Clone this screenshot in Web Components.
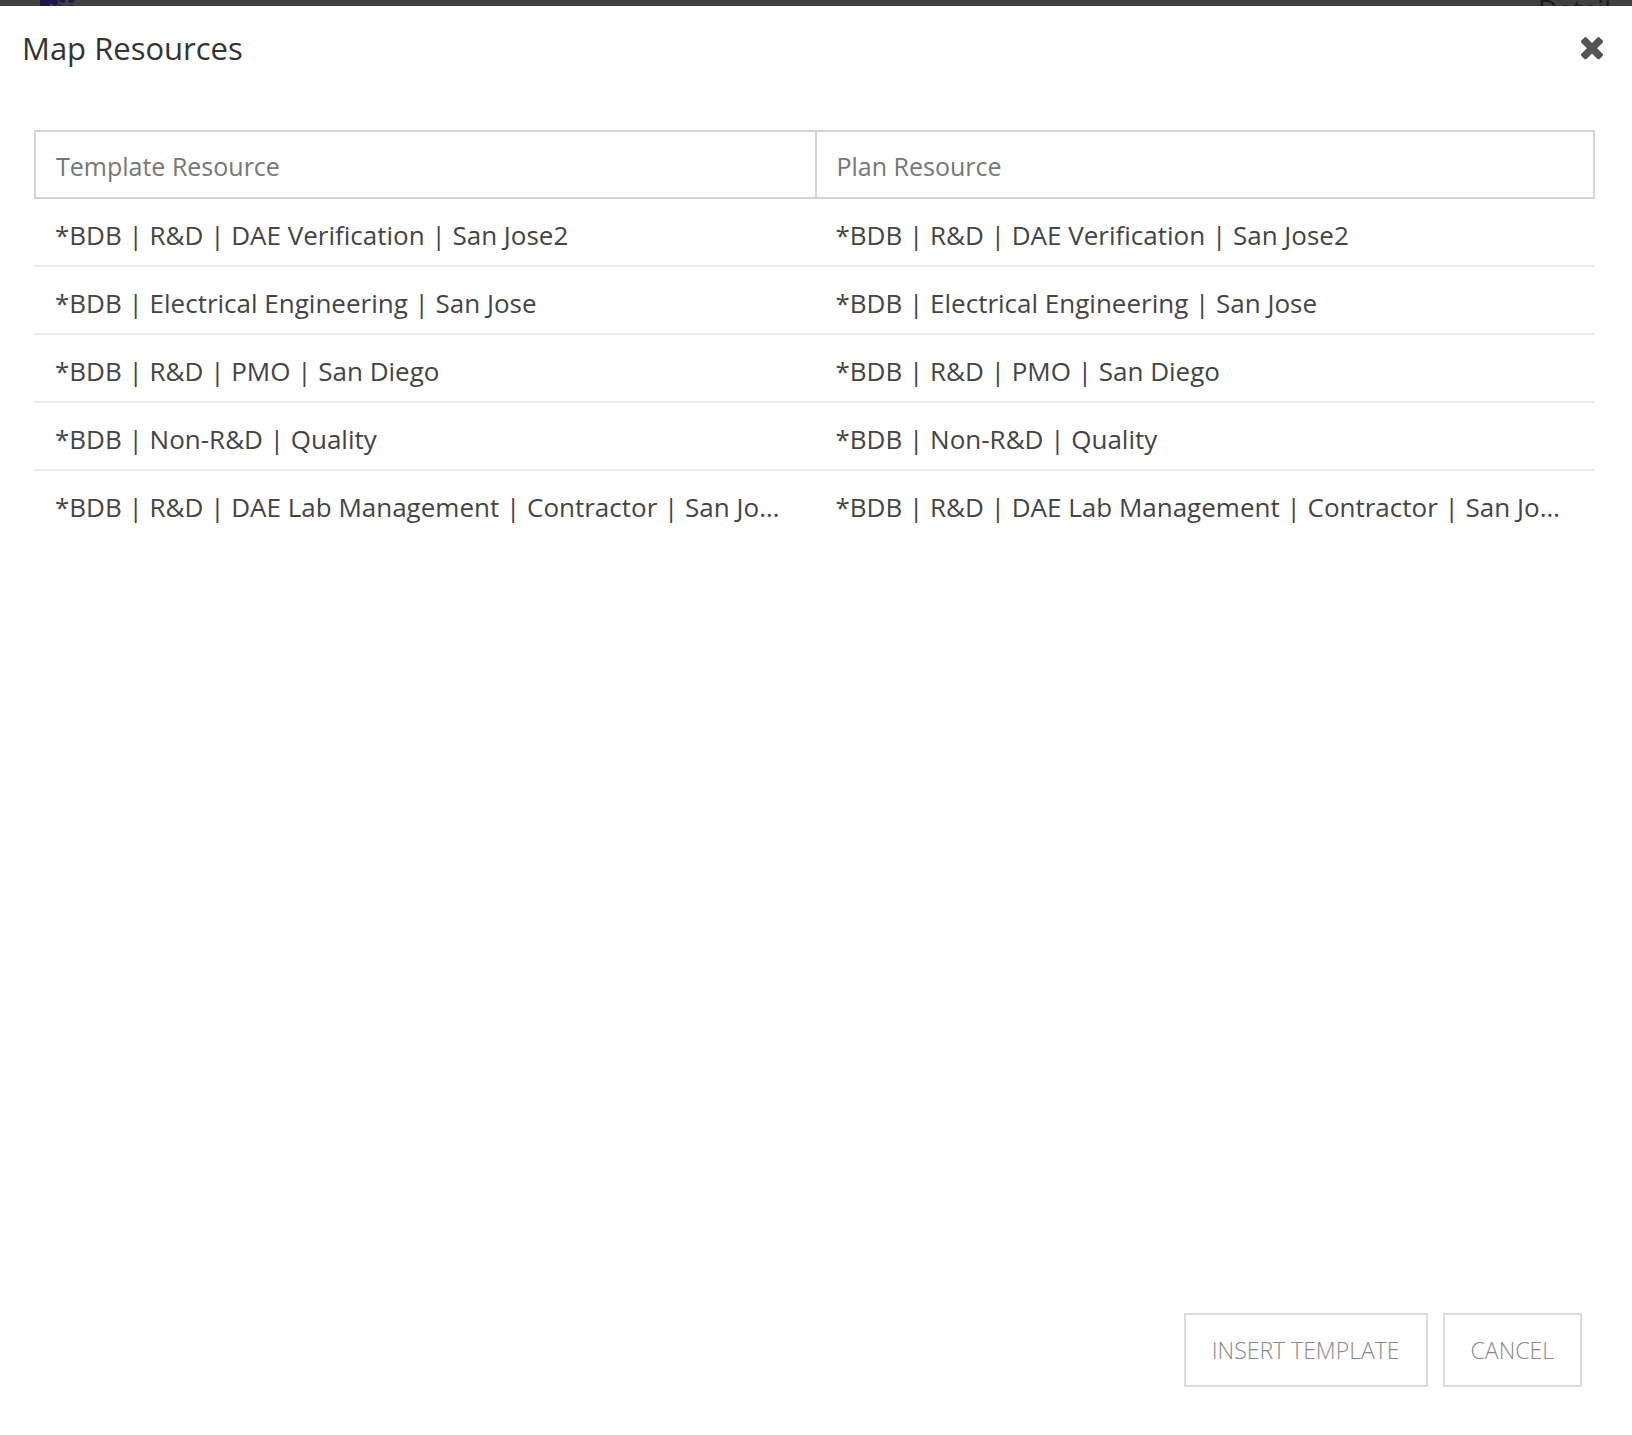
<!DOCTYPE html>
<html lang="en">
<head>
<meta charset="UTF-8">
<meta name="viewport" content="width=device-width, initial-scale=1">
<title>Map Resources</title>
<style>
    html, body {
        height: 100%;
        margin: 0;
    }

    body {
        background: #404040;
        color: #444;
        font-family: "Segoe UI", "Open Sans", "Noto Sans", sans-serif;
        font-size: 26px;
        overflow: hidden;
    }
</style>
</head>
<body>
<page-backdrop>Detail</page-backdrop>
<modal-dialog heading="Map Resources">
    <resource-map></resource-map>
    <dialog-button slot="actions">INSERT TEMPLATE</dialog-button>
    <dialog-button slot="actions">CANCEL</dialog-button>
</modal-dialog>

<script>
// The dimmed page that stays visible above the dialog
class PageBackdrop extends HTMLElement {
    constructor() {
        super();
        this.attachShadow({ mode: 'open' });
        this.shadowRoot.innerHTML = `
      <style>
        :host {
          display: flex;
          justify-content: space-between;
          height: 6px;
          padding: 0 21px 0 40px;
          overflow: hidden;
          background: #404040;
          color: #1a1a1a;
          font-size: 27px;
          line-height: 20px;
        }

        svg {
          display: block;
          flex: none;
        }
      </style>

      <svg width="36" height="6" viewBox="0 0 36 6" fill="#1c1a48" aria-hidden="true">
        <path d="M0 0H18V3L16 6H13V4H10V6H0Z"/>
        <path d="M19 0H25V2Q22 4 19 1ZM28 0H35Q34 3 31 3T28 0Z"/>
        <path d="M18 6Q20 3 23 6ZM28 6Q31 4 35 6Z"/>
      </svg>
      <span><slot></slot></span>
    `;
    }
}

class ModalDialog extends HTMLElement {
    constructor() {
        super();
        this.attachShadow({ mode: 'open' });
        this.shadowRoot.innerHTML = `
      <style>
        :host {
          display: block;
          height: calc(100% - 6px);
          background: #fff;
        }

        section {
          display: flex;
          flex-direction: column;
          height: 100%;
        }

        header {
          display: flex;
          align-items: center;
          justify-content: space-between;
          height: 84px;
          padding: 0 28px 0 22px;
        }

        h1 {
          margin: 0;
          color: #333;
          font-size: 31px;
          font-weight: 400;
        }

        .close-btn {
          padding: 0;
          border: 0;
          background: none;
          color: #555;
          cursor: pointer;
        }

        .close-btn svg {
          display: block;
        }

        .content {
          flex: 1;
          padding: 40px 37px 0 34px;
        }

        footer {
          display: flex;
          justify-content: flex-end;
          gap: 15px;
          padding: 0 50px 48px;
        }
      </style>

      <section role="dialog" aria-labelledby="heading">
        <header>
          <h1 id="heading"></h1>
          <button class="close-btn" type="button" aria-label="Close">
            <svg width="24" height="24" viewBox="0 0 24 24" fill="currentColor">
              <path d="M23 18.8q0 .8-.6 1.4l-2.6 2.5q-.6.6-1.3.6t-1.3-.6L12 17.4l-5.200 5.300q-.6.6-1.300.6t-1.300-.6l-2.600-2.500Q1 19.600 1 18.800t.6-1.300L6.900 12.200 1.600 7Q1 6.400 1 5.600t.6-1.300l2.600-2.600q.6-.6 1.300-.6t1.300.6L12 7l5.200-5.300q.6-.6 1.300-.6t1.300.6l2.600 2.600q.6.5.6 1.300t-.6 1.400l-5.300 5.200 5.300 5.300q.6.6.6 1.300z"/>
            </svg>
          </button>
        </header>
        <div class="content"><slot></slot></div>
        <footer><slot name="actions"></slot></footer>
      </section>
    `;
    }

    connectedCallback() {
        this.shadowRoot.querySelector('h1').textContent = this.getAttribute('heading');
        this.shadowRoot.querySelector('.close-btn').addEventListener('click', () => {
            this.remove();
        });
    }
}

class ResourceMap extends HTMLElement {
    constructor() {
        super();
        this.attachShadow({ mode: 'open' });
        this.shadowRoot.innerHTML = `
      <style>
        :host {
          display: block;
        }

        table {
          width: 100%;
          table-layout: fixed;
          border-collapse: separate;
          border-spacing: 0;
        }

        th, td {
          box-sizing: border-box;
          height: 68px;
          padding: 6px 28px 0 21px;
          overflow: hidden;
          text-align: left;
          text-overflow: ellipsis;
          white-space: nowrap;
        }

        th {
          height: 69px;
          padding-top: 2px;
          padding-left: 20px;
          border: 2px solid #d4d4d4;
          color: #777;
          font-size: 25px;
          font-weight: 400;
        }

        th:first-child {
          border-right: 0;
        }

        td {
          border-bottom: 2px solid #ebebeb;
        }

        tr:last-child td {
          border-bottom-color: transparent;
        }
      </style>

      <table>
        <thead>
          <tr><th scope="col">Template Resource</th><th scope="col">Plan Resource</th></tr>
        </thead>
        <tbody></tbody>
      </table>
    `;
    }

    /**
     * Fill the table, one row for each pair of resources
     * @param {{ template: string, plan: string }[]} rows
     */
    setData(rows) {
        const body = this.shadowRoot.querySelector('tbody');
        body.innerHTML = '';
        rows.forEach(row => {
            const tr = body.insertRow();
            tr.insertCell().textContent = row.template;
            tr.insertCell().textContent = row.plan;
        });
    }
}

class DialogButton extends HTMLElement {
    constructor() {
        super();
        this.attachShadow({ mode: 'open' });
        this.shadowRoot.innerHTML = `
      <style>
        :host {
          display: block;
        }

        button {
          height: 74px;
          padding: 0 26px;
          border: 2px solid #dcdcdc;
          background: #fff;
          color: #888;
          font-family: inherit;
          font-size: 23px;
          font-weight: 300;
          cursor: pointer;
        }
      </style>

      <button type="button"><slot></slot></button>
    `;
    }
}

customElements.define('page-backdrop', PageBackdrop);
customElements.define('modal-dialog', ModalDialog);
customElements.define('resource-map', ResourceMap);
customElements.define('dialog-button', DialogButton);

const resources = [
    '*BDB | R&D | DAE Verification | San Jose2',
    '*BDB | Electrical Engineering | San Jose',
    '*BDB | R&D | PMO | San Diego',
    '*BDB | Non-R&D | Quality',
    '*BDB | R&D | DAE Lab Management | Contractor | San Jose2'
];

document.querySelector('resource-map').setData(
    resources.map(name => ({ template: name, plan: name }))
);
</script>
</body>
</html>
